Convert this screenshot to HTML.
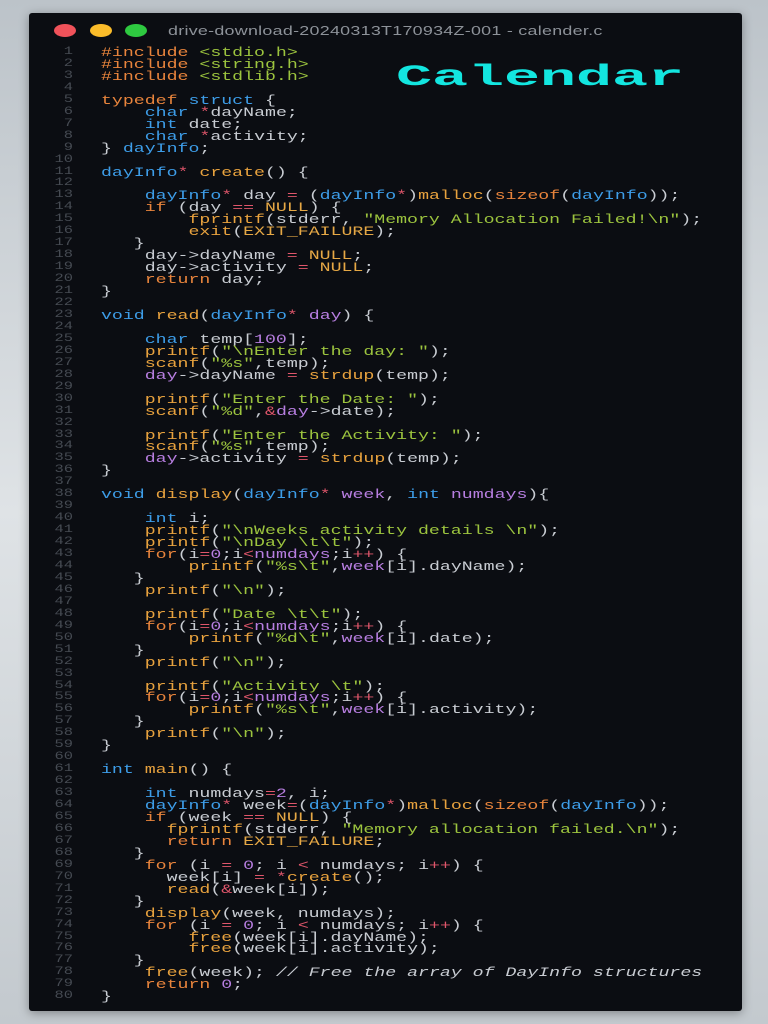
<!DOCTYPE html>
<html><head><meta charset="utf-8"><style>
html,body{margin:0;padding:0;width:768px;height:1024px;overflow:hidden;background:linear-gradient(180deg,#bcc3c9 0%,#dfe3e6 50%,#c3c9ce 100%);}
.win{position:absolute;left:29px;top:13px;width:713px;height:998px;background:#0b0d12;border-radius:3px;box-shadow:0 2px 10px rgba(0,0,0,.35);overflow:hidden;}
.dot{position:absolute;top:11px;width:22px;height:13px;border-radius:50%;}
.title{position:absolute;left:139px;top:10px;font:13px "Liberation Sans",sans-serif;color:#8d9299;white-space:pre;transform:scaleX(1.375);transform-origin:left top;letter-spacing:0.2px;}
.big{position:absolute;left:367px;top:48px;font:bold 30px "Liberation Mono",monospace;color:#13e6e0;transform:scaleX(2.0);transform-origin:left top;white-space:pre;}
.ln{position:absolute;left:0;top:34px;width:44px;margin:0;font:11px/11.95px "Liberation Mono",monospace;color:#464b53;text-align:right;white-space:pre;transform:scaleX(1.4);transform-origin:right top;}
.code{position:absolute;left:72px;top:34px;font:13px/11.95px "Liberation Mono",monospace;color:#c8ccd2;white-space:pre;transform:scaleX(1.401);transform-origin:left top;margin:0;}
.k{color:#e8843c}.f{color:#e8a23e}.t{color:#3d9de8}.s{color:#9cc43e}.n{color:#b77ee0}.o{color:#e0566b}.c{color:#e6a845}.m{color:#c8ccd2;font-style:italic}
</style></head><body>
<div class="win">
<div class="dot" style="left:25px;background:#f0525a"></div>
<div class="dot" style="left:61px;background:#fbbc2a"></div>
<div class="dot" style="left:96px;background:#2ec940"></div>
<div class="title">drive-download-20240313T170934Z-001 - calender.c</div>
<div class="big">Calendar</div>
<pre class="ln">1
2
3
4
5
6
7
8
9
10
11
12
13
14
15
16
17
18
19
20
21
22
23
24
25
26
27
28
29
30
31
32
33
34
35
36
37
38
39
40
41
42
43
44
45
46
47
48
49
50
51
52
53
54
55
56
57
58
59
60
61
62
63
64
65
66
67
68
69
70
71
72
73
74
75
76
77
78
79
80</pre>
<pre class="code"><span class="k">#include</span> <span class="s">&lt;stdio.h&gt;</span>
<span class="k">#include</span> <span class="s">&lt;string.h&gt;</span>
<span class="k">#include</span> <span class="s">&lt;stdlib.h&gt;</span>

<span class="k">typedef</span> <span class="t">struct</span> {
    <span class="t">char</span> <span class="o">*</span>dayName;
    <span class="t">int</span> date;
    <span class="t">char</span> <span class="o">*</span>activity;
} <span class="t">dayInfo</span>;

<span class="t">dayInfo</span><span class="o">*</span> <span class="f">create</span>() {

    <span class="t">dayInfo</span><span class="o">*</span> day <span class="o">=</span> (<span class="t">dayInfo</span><span class="o">*</span>)<span class="f">malloc</span>(<span class="k">sizeof</span>(<span class="t">dayInfo</span>));
    <span class="k">if</span> (day <span class="o">==</span> <span class="c">NULL</span>) {
        <span class="f">fprintf</span>(stderr, <span class="s">"Memory Allocation Failed!\n"</span>);
        <span class="f">exit</span>(<span class="c">EXIT_FAILURE</span>);
   }
    day-&gt;dayName <span class="o">=</span> <span class="c">NULL</span>;
    day-&gt;activity <span class="o">=</span> <span class="c">NULL</span>;
    <span class="k">return</span> day;
}

<span class="t">void</span> <span class="f">read</span>(<span class="t">dayInfo</span><span class="o">*</span> <span class="n">day</span>) {

    <span class="t">char</span> temp[<span class="n">100</span>];
    <span class="f">printf</span>(<span class="s">"\nEnter the day: "</span>);
    <span class="f">scanf</span>(<span class="s">"%s"</span>,temp);
    <span class="n">day</span>-&gt;dayName <span class="o">=</span> <span class="f">strdup</span>(temp);

    <span class="f">printf</span>(<span class="s">"Enter the Date: "</span>);
    <span class="f">scanf</span>(<span class="s">"%d"</span>,<span class="o">&amp;</span><span class="n">day</span>-&gt;date);

    <span class="f">printf</span>(<span class="s">"Enter the Activity: "</span>);
    <span class="f">scanf</span>(<span class="s">"%s"</span>,temp);
    <span class="n">day</span>-&gt;activity <span class="o">=</span> <span class="f">strdup</span>(temp);
}

<span class="t">void</span> <span class="f">display</span>(<span class="t">dayInfo</span><span class="o">*</span> <span class="n">week</span>, <span class="t">int</span> <span class="n">numdays</span>){

    <span class="t">int</span> i;
    <span class="f">printf</span>(<span class="s">"\nWeeks activity details \n"</span>);
    <span class="f">printf</span>(<span class="s">"\nDay \t\t"</span>);
    <span class="k">for</span>(i<span class="o">=</span><span class="n">0</span>;i<span class="o">&lt;</span><span class="n">numdays</span>;i<span class="o">++</span>) {
        <span class="f">printf</span>(<span class="s">"%s\t"</span>,<span class="n">week</span>[i].dayName);
   }
    <span class="f">printf</span>(<span class="s">"\n"</span>);

    <span class="f">printf</span>(<span class="s">"Date \t\t"</span>);
    <span class="k">for</span>(i<span class="o">=</span><span class="n">0</span>;i<span class="o">&lt;</span><span class="n">numdays</span>;i<span class="o">++</span>) {
        <span class="f">printf</span>(<span class="s">"%d\t"</span>,<span class="n">week</span>[i].date);
   }
    <span class="f">printf</span>(<span class="s">"\n"</span>);

    <span class="f">printf</span>(<span class="s">"Activity \t"</span>);
    <span class="k">for</span>(i<span class="o">=</span><span class="n">0</span>;i<span class="o">&lt;</span><span class="n">numdays</span>;i<span class="o">++</span>) {
        <span class="f">printf</span>(<span class="s">"%s\t"</span>,<span class="n">week</span>[i].activity);
   }
    <span class="f">printf</span>(<span class="s">"\n"</span>);
}

<span class="t">int</span> <span class="f">main</span>() {

    <span class="t">int</span> numdays<span class="o">=</span><span class="n">2</span>, i;
    <span class="t">dayInfo</span><span class="o">*</span> week<span class="o">=</span>(<span class="t">dayInfo</span><span class="o">*</span>)<span class="f">malloc</span>(<span class="k">sizeof</span>(<span class="t">dayInfo</span>));
    <span class="k">if</span> (week <span class="o">==</span> <span class="c">NULL</span>) {
      <span class="f">fprintf</span>(stderr, <span class="s">"Memory allocation failed.\n"</span>);
      <span class="k">return</span> <span class="c">EXIT_FAILURE</span>;
   }
    <span class="k">for</span> (i <span class="o">=</span> <span class="n">0</span>; i <span class="o">&lt;</span> numdays; i<span class="o">++</span>) {
      week[i] <span class="o">=</span> <span class="o">*</span><span class="f">create</span>();
      <span class="f">read</span>(<span class="o">&amp;</span>week[i]);
   }
    <span class="f">display</span>(week, numdays);
    <span class="k">for</span> (i <span class="o">=</span> <span class="n">0</span>; i <span class="o">&lt;</span> numdays; i<span class="o">++</span>) {
        <span class="f">free</span>(week[i].dayName);
        <span class="f">free</span>(week[i].activity);
   }
    <span class="f">free</span>(week); <span class="m">// Free the array of DayInfo structures</span>
    <span class="k">return</span> <span class="n">0</span>;
}</pre>
</div>
</body></html>
